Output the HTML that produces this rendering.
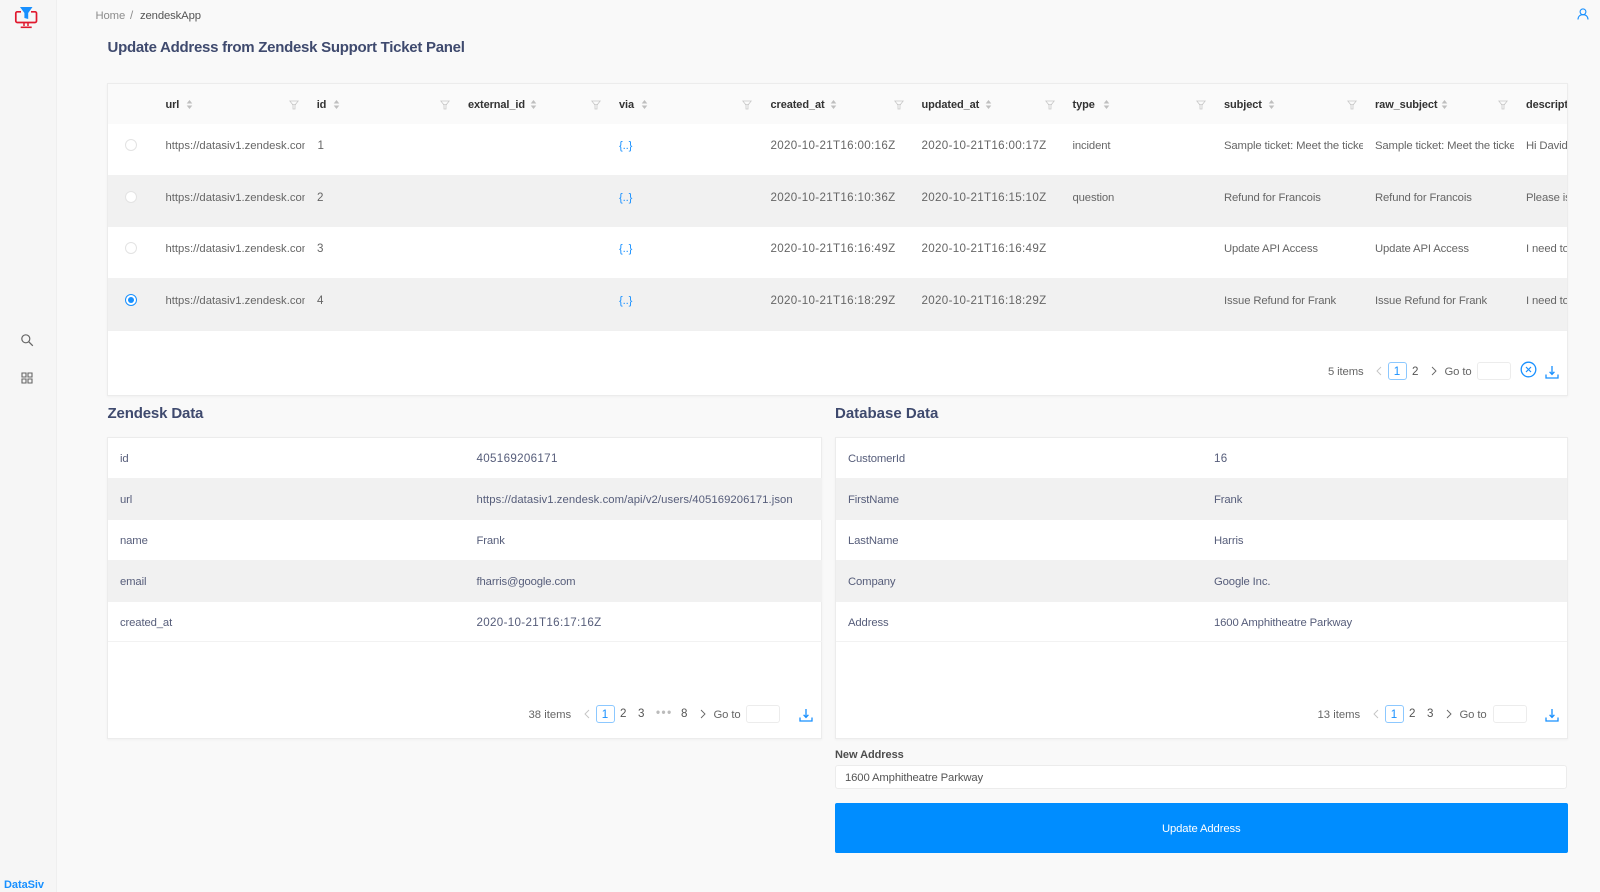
<!DOCTYPE html>
<html>
<head>
<meta charset="utf-8">
<style>
html,body{margin:0;padding:0;width:1600px;height:892px;overflow:hidden;background:#f9f9f9;}
body{position:relative;font-family:"Liberation Sans",sans-serif;font-size:11.6px;color:#666;filter:blur(.25px);}
div,svg{position:absolute;}
.t{white-space:nowrap;line-height:14px;letter-spacing:.32px;}
.a{font-size:11.3px;letter-spacing:-.13px;}
.u{font-size:11.3px;letter-spacing:0;}
.c{overflow:hidden;}
.h{color:#333;font-weight:bold;font-size:11px;letter-spacing:-.1px;}
.s{color:#565d7a;}
.b{color:#1890ff;}
.box{background:#fff;border:1px solid #ececec;box-sizing:border-box;box-shadow:0 1px 2px rgba(0,0,0,.04);}
.r{background:#f1f1f1;}
.title{color:#3f4a6e;font-weight:bold;white-space:nowrap;line-height:20px;font-size:15px;}
.pg{width:19px;height:18px;border:1px solid #8cc8ff;border-radius:3px;box-sizing:border-box;background:#fff;color:#1890ff;text-align:center;line-height:17px;font-size:11.6px;}
.in{width:34px;height:18px;border:1px solid #ececec;border-radius:3px;box-sizing:border-box;background:#fff;}
.rd{width:12px;height:12px;border:1px solid #e3e3e3;border-radius:50%;box-sizing:border-box;background:#fff;left:124.5px;}
</style>
</head>
<body>
<svg width="0" height="0" style="left:0;top:0">
<symbol id="sort" viewBox="0 0 8 12"><path d="M4 .8 7.2 4.8H.8z M4 11.2.8 7.2H7.2z" fill="#bfbfbf"/></symbol>
<symbol id="fil" viewBox="0 0 10 10"><path d="M.8 1h8.4L6 5v4H4V5z M3 4.6h4" fill="none" stroke="#c8c8c8" stroke-width=".8"/></symbol>
<symbol id="dl" viewBox="0 0 14 14"><path d="M7 1v8M4.6 6.8 7 9.4l2.4-2.6M1 9.5V13h12V9.5" fill="none" stroke="#1890ff" stroke-width="1.3"/></symbol>
<symbol id="lt" viewBox="0 0 6 10"><path d="M5 1 1 5l4 4" fill="none" stroke="currentColor" stroke-width=".9"/></symbol>
<symbol id="gt" viewBox="0 0 6 10"><path d="M1 1l4 4-4 4" fill="none" stroke="currentColor" stroke-width=".9"/></symbol>
</svg>

<!-- sidebar -->
<div style="left:0;top:0;width:56px;height:892px;background:#f6f6f6;border-right:1px solid #efefef;"></div>
<svg style="left:14px;top:6px" width="24" height="24" viewBox="0 0 24 24">
<path d="M7 5.800H3.300a1.500 1.500 0 0 0-1.500 1.500v7.700a1.500 1.500 0 0 0 1.500 1.500h17.700a1.500 1.500 0 0 0 1.500-1.500V7.300a1.500 1.500 0 0 0-1.500-1.500H17" fill="none" stroke="#e0182d" stroke-width="1.700"/>
<path d="M10 17v3M14 17v3" stroke="#e0182d" stroke-width="1.500" fill="none"/>
<path d="M6.700 21.300h11" stroke="#e0182d" stroke-width="1.600" fill="none"/>
<path d="M6 1h12.500l-4.300 6v6l-3.800-1V7z" fill="#1890ff"/>
</svg>
<svg style="left:20px;top:333px" width="14" height="14" viewBox="0 0 14 14"><circle cx="5.800" cy="5.800" r="4" fill="none" stroke="#666" stroke-width="1.200"/><path d="M8.800 8.800 12.800 12.800" stroke="#666" stroke-width="1.300"/></svg>
<svg style="left:21px;top:372px" width="12" height="12" viewBox="0 0 12 12"><path d="M1 1h4v4H1zM7 1h4v4H7zM1 7h4v4H1zM7 7h4v4H7z" fill="none" stroke="#666" stroke-width="1.100"/></svg>
<div class="t" style="left:4px;top:878px;color:#1890ff;font-weight:bold;font-size:11px;letter-spacing:-.05px;">DataSiv</div>

<!-- top -->
<div class="t a" style="left:95.500px;top:9px;color:#8c8c8c;">Home</div>
<div class="t" style="left:130px;top:9px;color:#8c8c8c;">/</div>
<div class="t a" style="left:140px;top:9px;color:#555;">zendeskApp</div>
<svg style="left:1577px;top:8px" width="12" height="12" viewBox="0 0 12 12"><circle cx="6" cy="3.800" r="2.900" fill="none" stroke="#1890ff" stroke-width="1.100"/><path d="M1 11.500c0-3 2-4.800 5-4.800s5 1.800 5 4.800" fill="none" stroke="#1890ff" stroke-width="1.100"/></svg>
<div class="title" style="left:107.500px;top:38px;letter-spacing:-.27px;">Update Address from Zendesk Support Ticket Panel</div>

<!-- main table -->
<div class="box" style="left:107px;top:83px;width:1461px;height:312.500px;"></div>
<div style="left:108px;top:84px;width:1459px;height:40px;background:#fafafa;"></div>
<div class="r" style="left:108px;top:175px;width:1459px;height:52px;"></div>
<div class="r" style="left:108px;top:278px;width:1459px;height:52px;"></div>
<div style="left:108px;top:330px;width:1459px;height:1px;background:#f0f0f0;"></div>

<div class="t h" style="left:165.500px;top:98px;">url</div>
<div class="t h" style="left:316.700px;top:98px;">id</div>
<div class="t h" style="left:468px;top:98px;">external_id</div>
<div class="t h" style="left:619px;top:98px;">via</div>
<div class="t h" style="left:770.500px;top:98px;">created_at</div>
<div class="t h" style="left:921.500px;top:98px;">updated_at</div>
<div class="t h" style="left:1072.500px;top:98px;">type</div>
<div class="t h" style="left:1224px;top:98px;">subject</div>
<div class="t h" style="left:1375px;top:98px;">raw_subject</div>
<div class="t h c" style="left:1526px;top:98px;width:41px;">description</div>

<svg style="left:186px;top:99px" width="7" height="11"><use href="#sort"/></svg>
<svg style="left:333px;top:99px" width="7" height="11"><use href="#sort"/></svg>
<svg style="left:530px;top:99px" width="7" height="11"><use href="#sort"/></svg>
<svg style="left:641px;top:99px" width="7" height="11"><use href="#sort"/></svg>
<svg style="left:830px;top:99px" width="7" height="11"><use href="#sort"/></svg>
<svg style="left:985px;top:99px" width="7" height="11"><use href="#sort"/></svg>
<svg style="left:1103px;top:99px" width="7" height="11"><use href="#sort"/></svg>
<svg style="left:1268px;top:99px" width="7" height="11"><use href="#sort"/></svg>
<svg style="left:1441px;top:99px" width="7" height="11"><use href="#sort"/></svg>

<svg style="left:289px;top:100px" width="10" height="10"><use href="#fil"/></svg>
<svg style="left:440px;top:100px" width="10" height="10"><use href="#fil"/></svg>
<svg style="left:591px;top:100px" width="10" height="10"><use href="#fil"/></svg>
<svg style="left:742px;top:100px" width="10" height="10"><use href="#fil"/></svg>
<svg style="left:894px;top:100px" width="10" height="10"><use href="#fil"/></svg>
<svg style="left:1045px;top:100px" width="10" height="10"><use href="#fil"/></svg>
<svg style="left:1196px;top:100px" width="10" height="10"><use href="#fil"/></svg>
<svg style="left:1347px;top:100px" width="10" height="10"><use href="#fil"/></svg>
<svg style="left:1498px;top:100px" width="10" height="10"><use href="#fil"/></svg>

<!-- radios -->
<div class="rd" style="top:139px"></div>
<div class="rd" style="top:190.500px"></div>
<div class="rd" style="top:242px"></div>
<div class="rd" style="top:293.500px;border-color:#1890ff;"><div style="left:2px;top:2px;width:6px;height:6px;border-radius:50%;background:#1890ff;"></div></div>

<!-- row 1 -->
<div class="t c u" style="left:165.500px;top:139px;width:139.500px;">https://datasiv1.zendesk.com/api/v2/tickets/1.json</div>
<div class="t" style="left:317.500px;top:139px;">1</div>
<div class="t b a" style="left:619px;top:139px;">{..}</div>
<div class="t" style="left:770.500px;top:139px;">2020-10-21T16:00:16Z</div>
<div class="t" style="left:921.500px;top:139px;">2020-10-21T16:00:17Z</div>
<div class="t a" style="left:1072.500px;top:139px;">incident</div>
<div class="t c a" style="left:1224px;top:139px;width:139px;">Sample ticket: Meet the ticket</div>
<div class="t c a" style="left:1375px;top:139px;width:139px;">Sample ticket: Meet the ticket</div>
<div class="t c a" style="left:1526px;top:139px;width:41px;">Hi David, Emily</div>
<!-- row 2 -->
<div class="t c u" style="left:165.500px;top:190.500px;width:139.500px;">https://datasiv1.zendesk.com/api/v2/tickets/2.json</div>
<div class="t" style="left:317px;top:190.500px;">2</div>
<div class="t b a" style="left:619px;top:190.500px;">{..}</div>
<div class="t" style="left:770.500px;top:190.500px;">2020-10-21T16:10:36Z</div>
<div class="t" style="left:921.500px;top:190.500px;">2020-10-21T16:15:10Z</div>
<div class="t a" style="left:1072.500px;top:190.500px;">question</div>
<div class="t a" style="left:1224px;top:190.500px;">Refund for Francois</div>
<div class="t a" style="left:1375px;top:190.500px;">Refund for Francois</div>
<div class="t c a" style="left:1526px;top:190.500px;width:41px;">Please issue</div>
<!-- row 3 -->
<div class="t c u" style="left:165.500px;top:242px;width:139.500px;">https://datasiv1.zendesk.com/api/v2/tickets/3.json</div>
<div class="t" style="left:317px;top:242px;">3</div>
<div class="t b a" style="left:619px;top:242px;">{..}</div>
<div class="t" style="left:770.500px;top:242px;">2020-10-21T16:16:49Z</div>
<div class="t" style="left:921.500px;top:242px;">2020-10-21T16:16:49Z</div>
<div class="t a" style="left:1224px;top:242px;">Update API Access</div>
<div class="t a" style="left:1375px;top:242px;">Update API Access</div>
<div class="t c a" style="left:1526px;top:242px;width:41px;">I need to get</div>
<!-- row 4 -->
<div class="t c u" style="left:165.500px;top:293.500px;width:139.500px;">https://datasiv1.zendesk.com/api/v2/tickets/4.json</div>
<div class="t" style="left:317px;top:293.500px;">4</div>
<div class="t b a" style="left:619px;top:293.500px;">{..}</div>
<div class="t" style="left:770.500px;top:293.500px;">2020-10-21T16:18:29Z</div>
<div class="t" style="left:921.500px;top:293.500px;">2020-10-21T16:18:29Z</div>
<div class="t a" style="left:1224px;top:293.500px;">Issue Refund for Frank</div>
<div class="t a" style="left:1375px;top:293.500px;">Issue Refund for Frank</div>
<div class="t c a" style="left:1526px;top:293.500px;width:41px;">I need to get</div>

<!-- main pager -->
<div class="t a" style="left:1328px;top:365px;">5 items</div>
<svg style="left:1376px;top:366px;color:#c4c4c4" width="6" height="10"><use href="#lt"/></svg>
<div class="pg" style="left:1387.500px;top:361.500px;">1</div>
<div class="t" style="left:1412px;top:364.500px;color:#555;">2</div>
<svg style="left:1431px;top:366px;color:#666" width="6" height="10"><use href="#gt"/></svg>
<div class="t a" style="left:1444.500px;top:365px;">Go to</div>
<div class="in" style="left:1477px;top:361.500px;"></div>
<svg style="left:1520px;top:361px" width="17" height="17" viewBox="0 0 17 17"><circle cx="8.500" cy="8.500" r="7.300" fill="none" stroke="#1890ff" stroke-width="1.300"/><path d="M6 6l5 5M11 6l-5 5" stroke="#1890ff" stroke-width="1.200"/></svg>
<svg style="left:1544.500px;top:365px" width="14" height="14"><use href="#dl"/></svg>

<!-- left data -->
<div class="title" style="left:107.500px;top:404px;letter-spacing:-.15px;">Zendesk Data</div>
<div class="box" style="left:107px;top:437px;width:715px;height:301.500px;"></div>
<div class="r" style="left:108px;top:478px;width:713.500px;height:41.500px;"></div>
<div class="r" style="left:108px;top:560px;width:713.500px;height:42px;"></div>
<div style="left:108px;top:641px;width:713.500px;height:1px;background:#f2f2f2;"></div>
<div class="t s a" style="left:120px;top:452px;">id</div>
<div class="t s" style="left:476.500px;top:452px;">405169206171</div>
<div class="t s a" style="left:120px;top:493px;">url</div>
<div class="t s u" style="left:476.500px;top:493px;letter-spacing:.07px;">https://datasiv1.zendesk.com/api/v2/users/405169206171.json</div>
<div class="t s a" style="left:120px;top:534px;">name</div>
<div class="t s a" style="left:476.500px;top:534px;">Frank</div>
<div class="t s a" style="left:120px;top:575px;">email</div>
<div class="t s a" style="left:476.500px;top:575px;">fharris@google.com</div>
<div class="t s a" style="left:120px;top:615.500px;">created_at</div>
<div class="t s" style="left:476.500px;top:615.500px;">2020-10-21T16:17:16Z</div>

<div class="t u" style="left:528.500px;top:707.500px;">38 items</div>
<svg style="left:584px;top:709px;color:#c4c4c4" width="6" height="10"><use href="#lt"/></svg>
<div class="pg" style="left:595.500px;top:705px;">1</div>
<div class="t" style="left:620px;top:707px;color:#555;">2</div>
<div class="t" style="left:638px;top:707px;color:#555;">3</div>
<div class="t" style="left:656px;top:706px;color:#bbb;letter-spacing:1.500px;font-weight:bold;">•••</div>
<div class="t" style="left:681px;top:707px;color:#555;">8</div>
<svg style="left:700px;top:709px;color:#666" width="6" height="10"><use href="#gt"/></svg>
<div class="t a" style="left:713.500px;top:707.500px;">Go to</div>
<div class="in" style="left:746px;top:704.500px;"></div>
<svg style="left:798.500px;top:708px" width="14" height="14"><use href="#dl"/></svg>

<!-- right data -->
<div class="title" style="left:835px;top:404px;">Database Data</div>
<div class="box" style="left:835px;top:437px;width:733px;height:301.500px;"></div>
<div class="r" style="left:836px;top:478px;width:731px;height:41.500px;"></div>
<div class="r" style="left:836px;top:560px;width:731px;height:42px;"></div>
<div style="left:836px;top:641px;width:731px;height:1px;background:#f2f2f2;"></div>
<div class="t s a" style="left:848px;top:452px;">CustomerId</div>
<div class="t s" style="left:1214px;top:452px;">16</div>
<div class="t s a" style="left:848px;top:493px;">FirstName</div>
<div class="t s a" style="left:1214px;top:493px;">Frank</div>
<div class="t s a" style="left:848px;top:534px;">LastName</div>
<div class="t s a" style="left:1214px;top:534px;">Harris</div>
<div class="t s a" style="left:848px;top:575px;">Company</div>
<div class="t s a" style="left:1214px;top:575px;">Google Inc.</div>
<div class="t s a" style="left:848px;top:615.500px;">Address</div>
<div class="t s a" style="left:1214px;top:615.500px;">1600 Amphitheatre Parkway</div>

<div class="t u" style="left:1317.500px;top:707.500px;">13 items</div>
<svg style="left:1373px;top:709px;color:#c4c4c4" width="6" height="10"><use href="#lt"/></svg>
<div class="pg" style="left:1384.500px;top:705px;">1</div>
<div class="t" style="left:1409px;top:707px;color:#555;">2</div>
<div class="t" style="left:1427px;top:707px;color:#555;">3</div>
<svg style="left:1446px;top:709px;color:#666" width="6" height="10"><use href="#gt"/></svg>
<div class="t a" style="left:1459.500px;top:707.500px;">Go to</div>
<div class="in" style="left:1493px;top:704.500px;"></div>
<svg style="left:1544.500px;top:708px" width="14" height="14"><use href="#dl"/></svg>

<div class="t" style="left:835px;top:748px;color:#4d4d4d;font-weight:bold;font-size:11px;letter-spacing:-.05px;">New Address</div>
<div style="left:835px;top:765px;width:732px;height:24px;background:#fff;border:1px solid #ececec;border-radius:3px;box-sizing:border-box;"></div>
<div class="t a" style="left:845px;top:771px;color:#555;">1600 Amphitheatre Parkway</div>
<div style="left:835px;top:803px;width:732.500px;height:49.500px;background:#008dff;border-radius:2px;"></div>
<div class="t a" style="left:835px;top:821.500px;width:732.500px;text-align:center;color:#fff;">Update Address</div>
</body>
</html>
